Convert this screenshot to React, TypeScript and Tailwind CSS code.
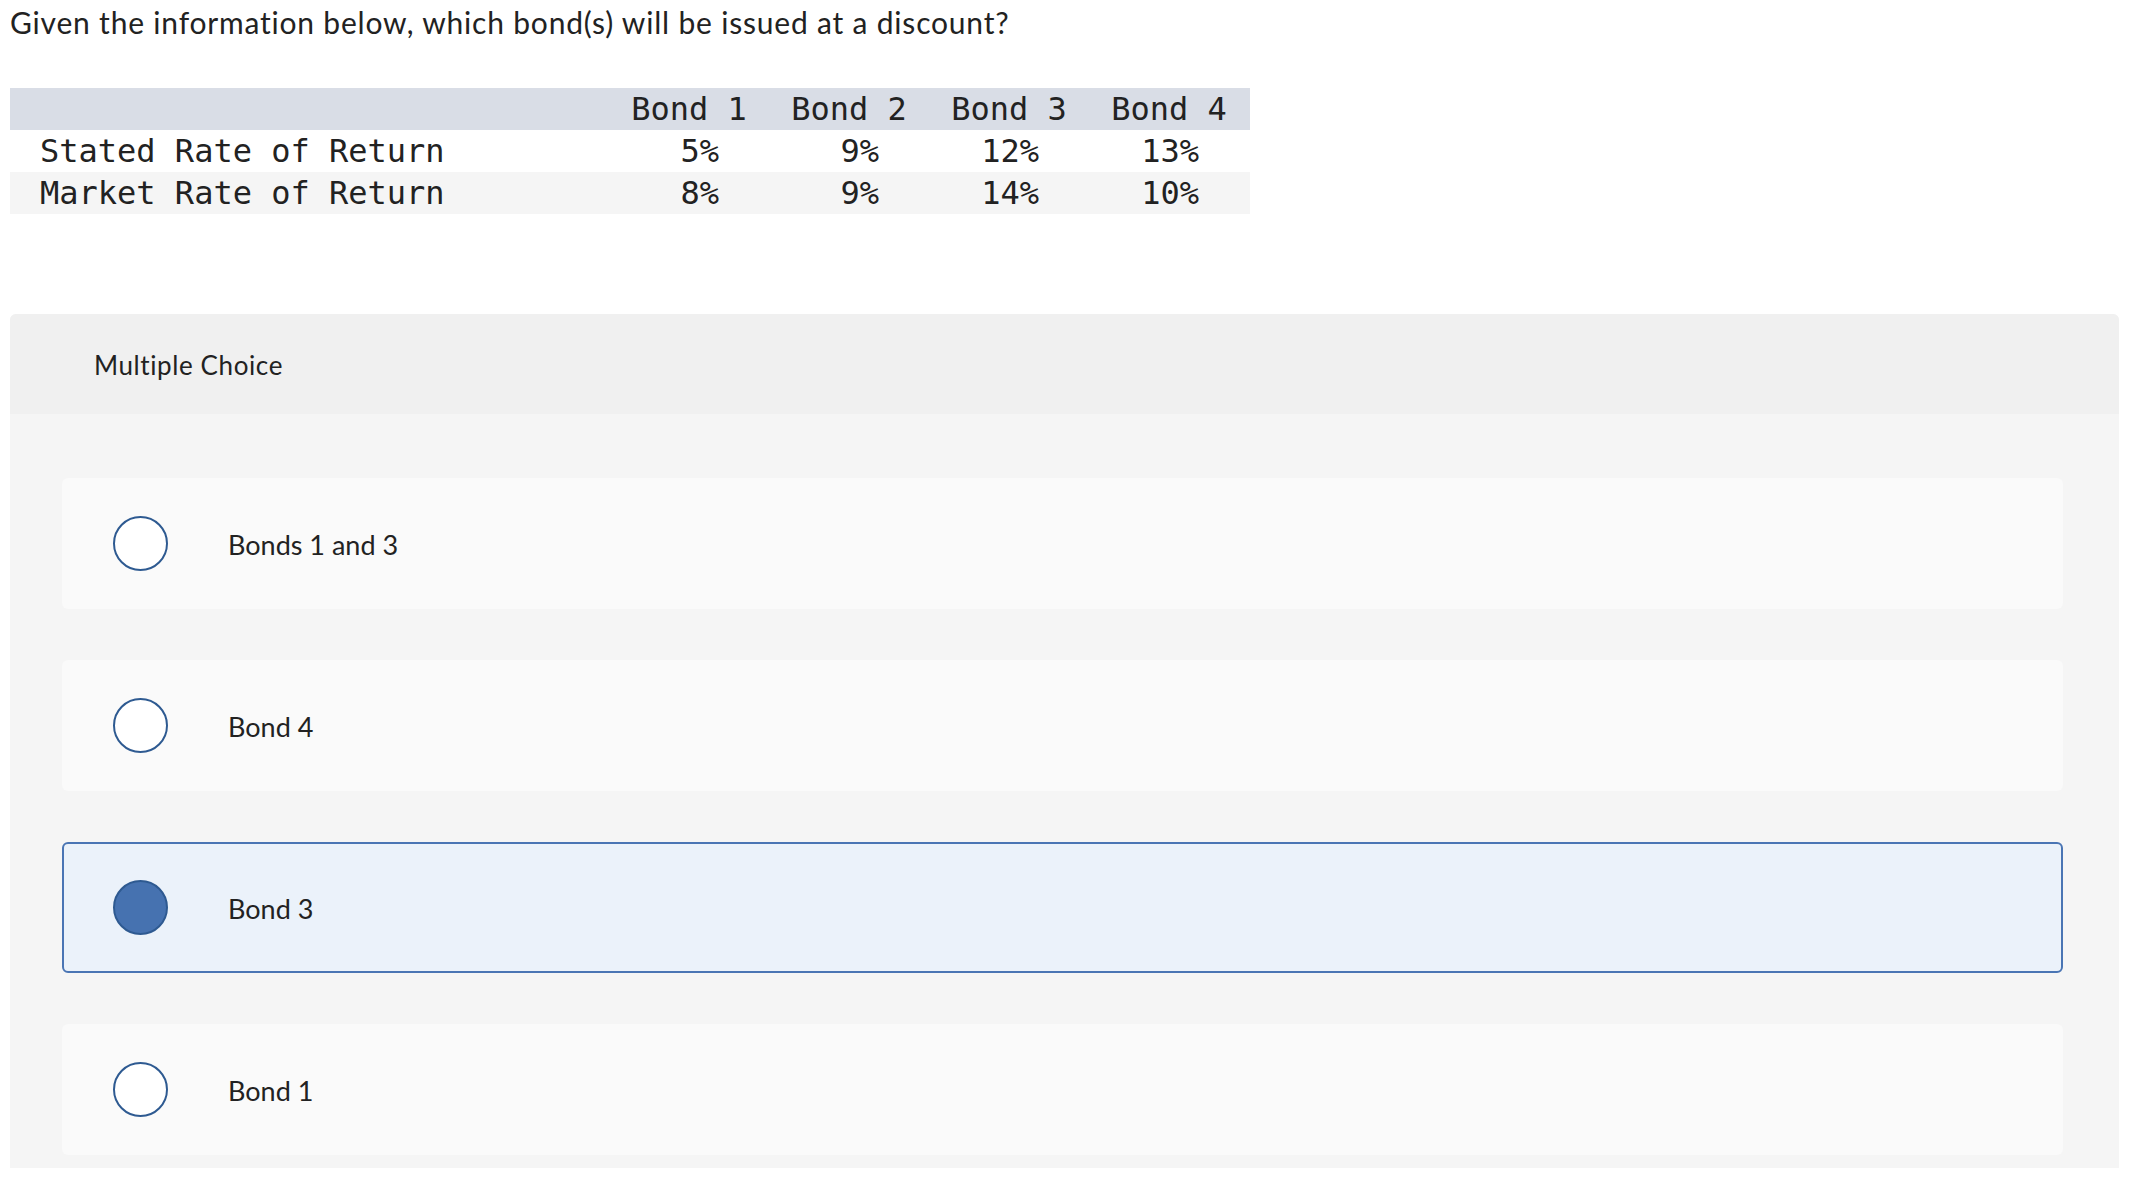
import React from "react";

const options = [
  { label: "Bonds 1 and 3", selected: false },
  { label: "Bond 4", selected: false },
  { label: "Bond 3", selected: true },
  { label: "Bond 1", selected: false },
];

const rows = [
  { label: "Stated Rate of Return", vals: ["5%", "9%", "12%", "13%"], bg: "bg-white" },
  { label: "Market Rate of Return", vals: ["8%", "9%", "14%", "10%"], bg: "bg-[#f5f5f5]" },
];

export default function App() {
  return (
    <div className="w-[2156px] h-[1190px] bg-white text-[#222] overflow-hidden" style={{ fontFamily: "Lato, 'Open Sans', sans-serif" }}>
      <div className="pl-[10px] pt-[3px] text-[30px] leading-[38px] tracking-[0.8px]">
        Given the information below, which bond(s) will be issued at a discount?
      </div>
      <div className="ml-[10px] mt-[47px] w-[1240px] text-[32px] leading-[42px]" style={{ fontFamily: "'DejaVu Sans Mono', monospace" }}>
        <div className="flex bg-[#d9dde6]">
          <div className="w-[599px]" />
          {["Bond 1", "Bond 2", "Bond 3", "Bond 4"].map((b) => (
            <div key={b} className="w-[160px] text-center whitespace-pre">{b}</div>
          ))}
        </div>
        {rows.map((r) => (
          <div key={r.label} className={`flex ${r.bg}`}>
            <div className="w-[599px] pl-[30px] whitespace-pre">{r.label}</div>
            {r.vals.map((v, i) => (
              <div key={i} className="w-[160px] text-right pr-[50px]">{v}</div>
            ))}
          </div>
        ))}
      </div>
      <div className="ml-[10px] mt-[100px] w-[2109px] h-[854px] rounded-t-[6px] bg-[#f5f5f5] overflow-hidden">
        <div className="h-[100px] bg-[#f0f0f0] flex items-center pl-[84px] pt-[2px] text-[26px] tracking-[0.6px]">
          Multiple Choice
        </div>
        <div className="pl-[52px] pr-[56px] pt-[64px] flex flex-col gap-[51px]">
          {options.map((o) => (
            <div
              key={o.label}
              className={`h-[131px] rounded-[6px] flex items-center ${
                o.selected ? "bg-[#ebf2fa] border-2 border-[#4a75b4] pl-[49px]" : "bg-[#fafafa] pl-[51px]"
              }`}
            >
              <div
                className={`w-[55px] h-[55px] rounded-full border-2 border-[#2e5a91] ${
                  o.selected ? "bg-[#4672b0]" : "bg-white"
                }`}
              />
              <div className="ml-[60px] pt-[3px] text-[27px]">{o.label}</div>
            </div>
          ))}
        </div>
      </div>
    </div>
  );
}
